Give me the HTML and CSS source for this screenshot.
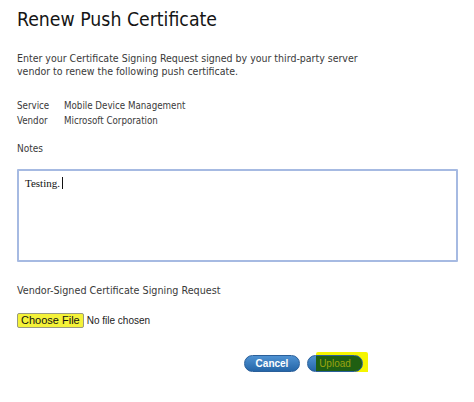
FILE: index.html
```html
<!DOCTYPE html>
<html lang="en">

<head>
    <meta charset="UTF-8">
    <title>Renew Push Certificate</title>
    <link rel="stylesheet" href="styles.css">
</head>

<body>
    <main class="renew">
        <h1 class="renew_title">Renew Push Certificate</h1>

        <p class="intro">Enter your Certificate Signing Request signed by your third-party server
            <br>vendor to renew the following push certificate.</p>

        <dl class="details">
            <div class="details_row">
                <dt>Service</dt>
                <dd>Mobile Device Management</dd>
            </div>
            <div class="details_row">
                <dt>Vendor</dt>
                <dd>Microsoft Corporation</dd>
            </div>
        </dl>

        <label class="label notes_label" for="notes">Notes</label>
        <div class="notes" id="notes">Testing.<span class="caret"></span></div>

        <p class="label csr_label">Vendor-Signed Certificate Signing Request</p>
        <div class="file_row">
            <span class="file_button">Choose File</span>
            <span class="file_status">No file chosen</span>
        </div>

        <div class="actions">
            <button class="pill">Cancel</button>
            <button class="pill pill_marked">Upload</button>
        </div>
    </main>
</body>

</html>
```

FILE: styles.css
```css
body {
    margin: 0;
    background-color: #fff;
    font-family: "DejaVu Sans", sans-serif;
    font-stretch: condensed;
    color: #3a3a3a;
}

.renew {
    padding: 0 16px 0 17px;
}

.renew_title {
    margin: 0;
    padding-top: 8px;
    font-size: 19.3px;
    line-height: 24px;
    font-weight: normal;
    color: #151515;
}

.intro {
    margin: 20px 0 0 0;
    font-size: 10.5px;
    line-height: 13px;
}

.details {
    margin: 20px 0 0 0;
    font-size: 9.7px;
    line-height: 15px;
}

.details_row {
    display: flex;
}

.details dt {
    width: 47px;
}

.details dd {
    margin: 0;
}

.label {
    display: block;
    font-size: 10px;
    line-height: 14px;
}

.notes_label {
    margin-top: 14px;
}

.notes {
    box-sizing: border-box;
    margin-top: 13px;
    height: 93px;
    border: 2px solid #a6bae2;
    border-radius: 1px;
    padding: 6px 6px;
    font-family: "Liberation Serif", serif;
    font-stretch: normal;
    font-size: 11px;
    line-height: 13px;
    color: #111;
}

.caret {
    display: inline-block;
    width: 1px;
    height: 12px;
    margin-left: 2px;
    vertical-align: -2px;
    background-color: #111;
}

.csr_label {
    margin: 22px 0 0 0;
    font-size: 10.7px;
}

.file_row {
    display: flex;
    align-items: center;
    margin-top: 15px;
    font-family: "Liberation Sans", sans-serif;
    font-stretch: normal;
    white-space: nowrap;
}

.file_button {
    box-sizing: border-box;
    height: 15px;
    padding: 0 3px;
    font-size: 11px;
    line-height: 13px;
    background-color: #f4f238;
    border: 1px solid #9a9a80;
    border-radius: 2px;
    color: #111;
}

.file_status {
    margin-left: 3px;
    font-size: 10px;
    color: #222;
}

.actions {
    display: flex;
    gap: 7px;
    margin-top: 27px;
    padding-left: 227px;
}

.pill {
    position: relative;
    width: 56px;
    height: 17px;
    padding: 0;
    border: 1px solid #2a5f9a;
    border-radius: 9px;
    background: linear-gradient(#4f92d2, #2566a8);
    font-family: "Liberation Sans", sans-serif;
    font-size: 10px;
    font-weight: bold;
    color: #fff;
}

.pill_marked {
    background: linear-gradient(90deg, transparent 8px, #1f5f12 8px), linear-gradient(#4f92d2, #2566a8);
    color: #9aa410;
    font-weight: normal;
}

/* highlighter stroke over the upload button */
.pill_marked::after {
    content: "";
    position: absolute;
    left: 8px;
    right: -6px;
    top: -4px;
    bottom: -10px;
    z-index: -1;
    background-color: #f5f500;
    border-radius: 2px;
}
```
